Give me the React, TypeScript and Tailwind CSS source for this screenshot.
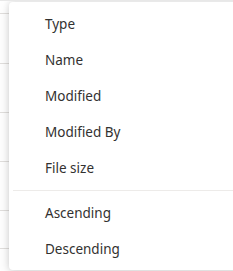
import React from "react";

const items = ["Type", "Name", "Modified", "Modified By", "File size"];
const sort = ["Ascending", "Descending"];

export default function App() {
  const lines = [13, 63, 112, 161, 210, 248];
  return (
    <div className="relative w-[233px] h-[271px] overflow-hidden bg-white border-t border-[#e8e8e8]" style={{ fontFamily: '"Segoe UI", "Noto Sans", sans-serif' }}>
      <div className="flex flex-col">
        {lines.map((y, i) => (
          <div key={i} className="absolute left-0 w-[20px] h-px bg-[#e1dfdd]" style={{ top: y - 1 }} />
        ))}
      </div>
      <div className="absolute left-[9px] top-[1px] w-[250px] h-[268px] rounded-[4px] bg-white shadow-[0_0_6px_rgba(0,0,0,0.13),0_3px_14px_rgba(0,0,0,0.11)] pt-[4px]">
        {items.map((t) => (
          <div key={t} className="h-[36px] flex items-center pl-[36px] text-[13.5px] text-[#323130]">
            {t}
          </div>
        ))}
        <div className="h-[9px] flex items-center pl-[4px]">
          <div className="h-px w-full bg-[#edebe9]" />
        </div>
        {sort.map((t) => (
          <div key={t} className="h-[36px] flex items-center pl-[36px] text-[13.5px] text-[#323130]">
            {t}
          </div>
        ))}
      </div>
    </div>
  );
}
